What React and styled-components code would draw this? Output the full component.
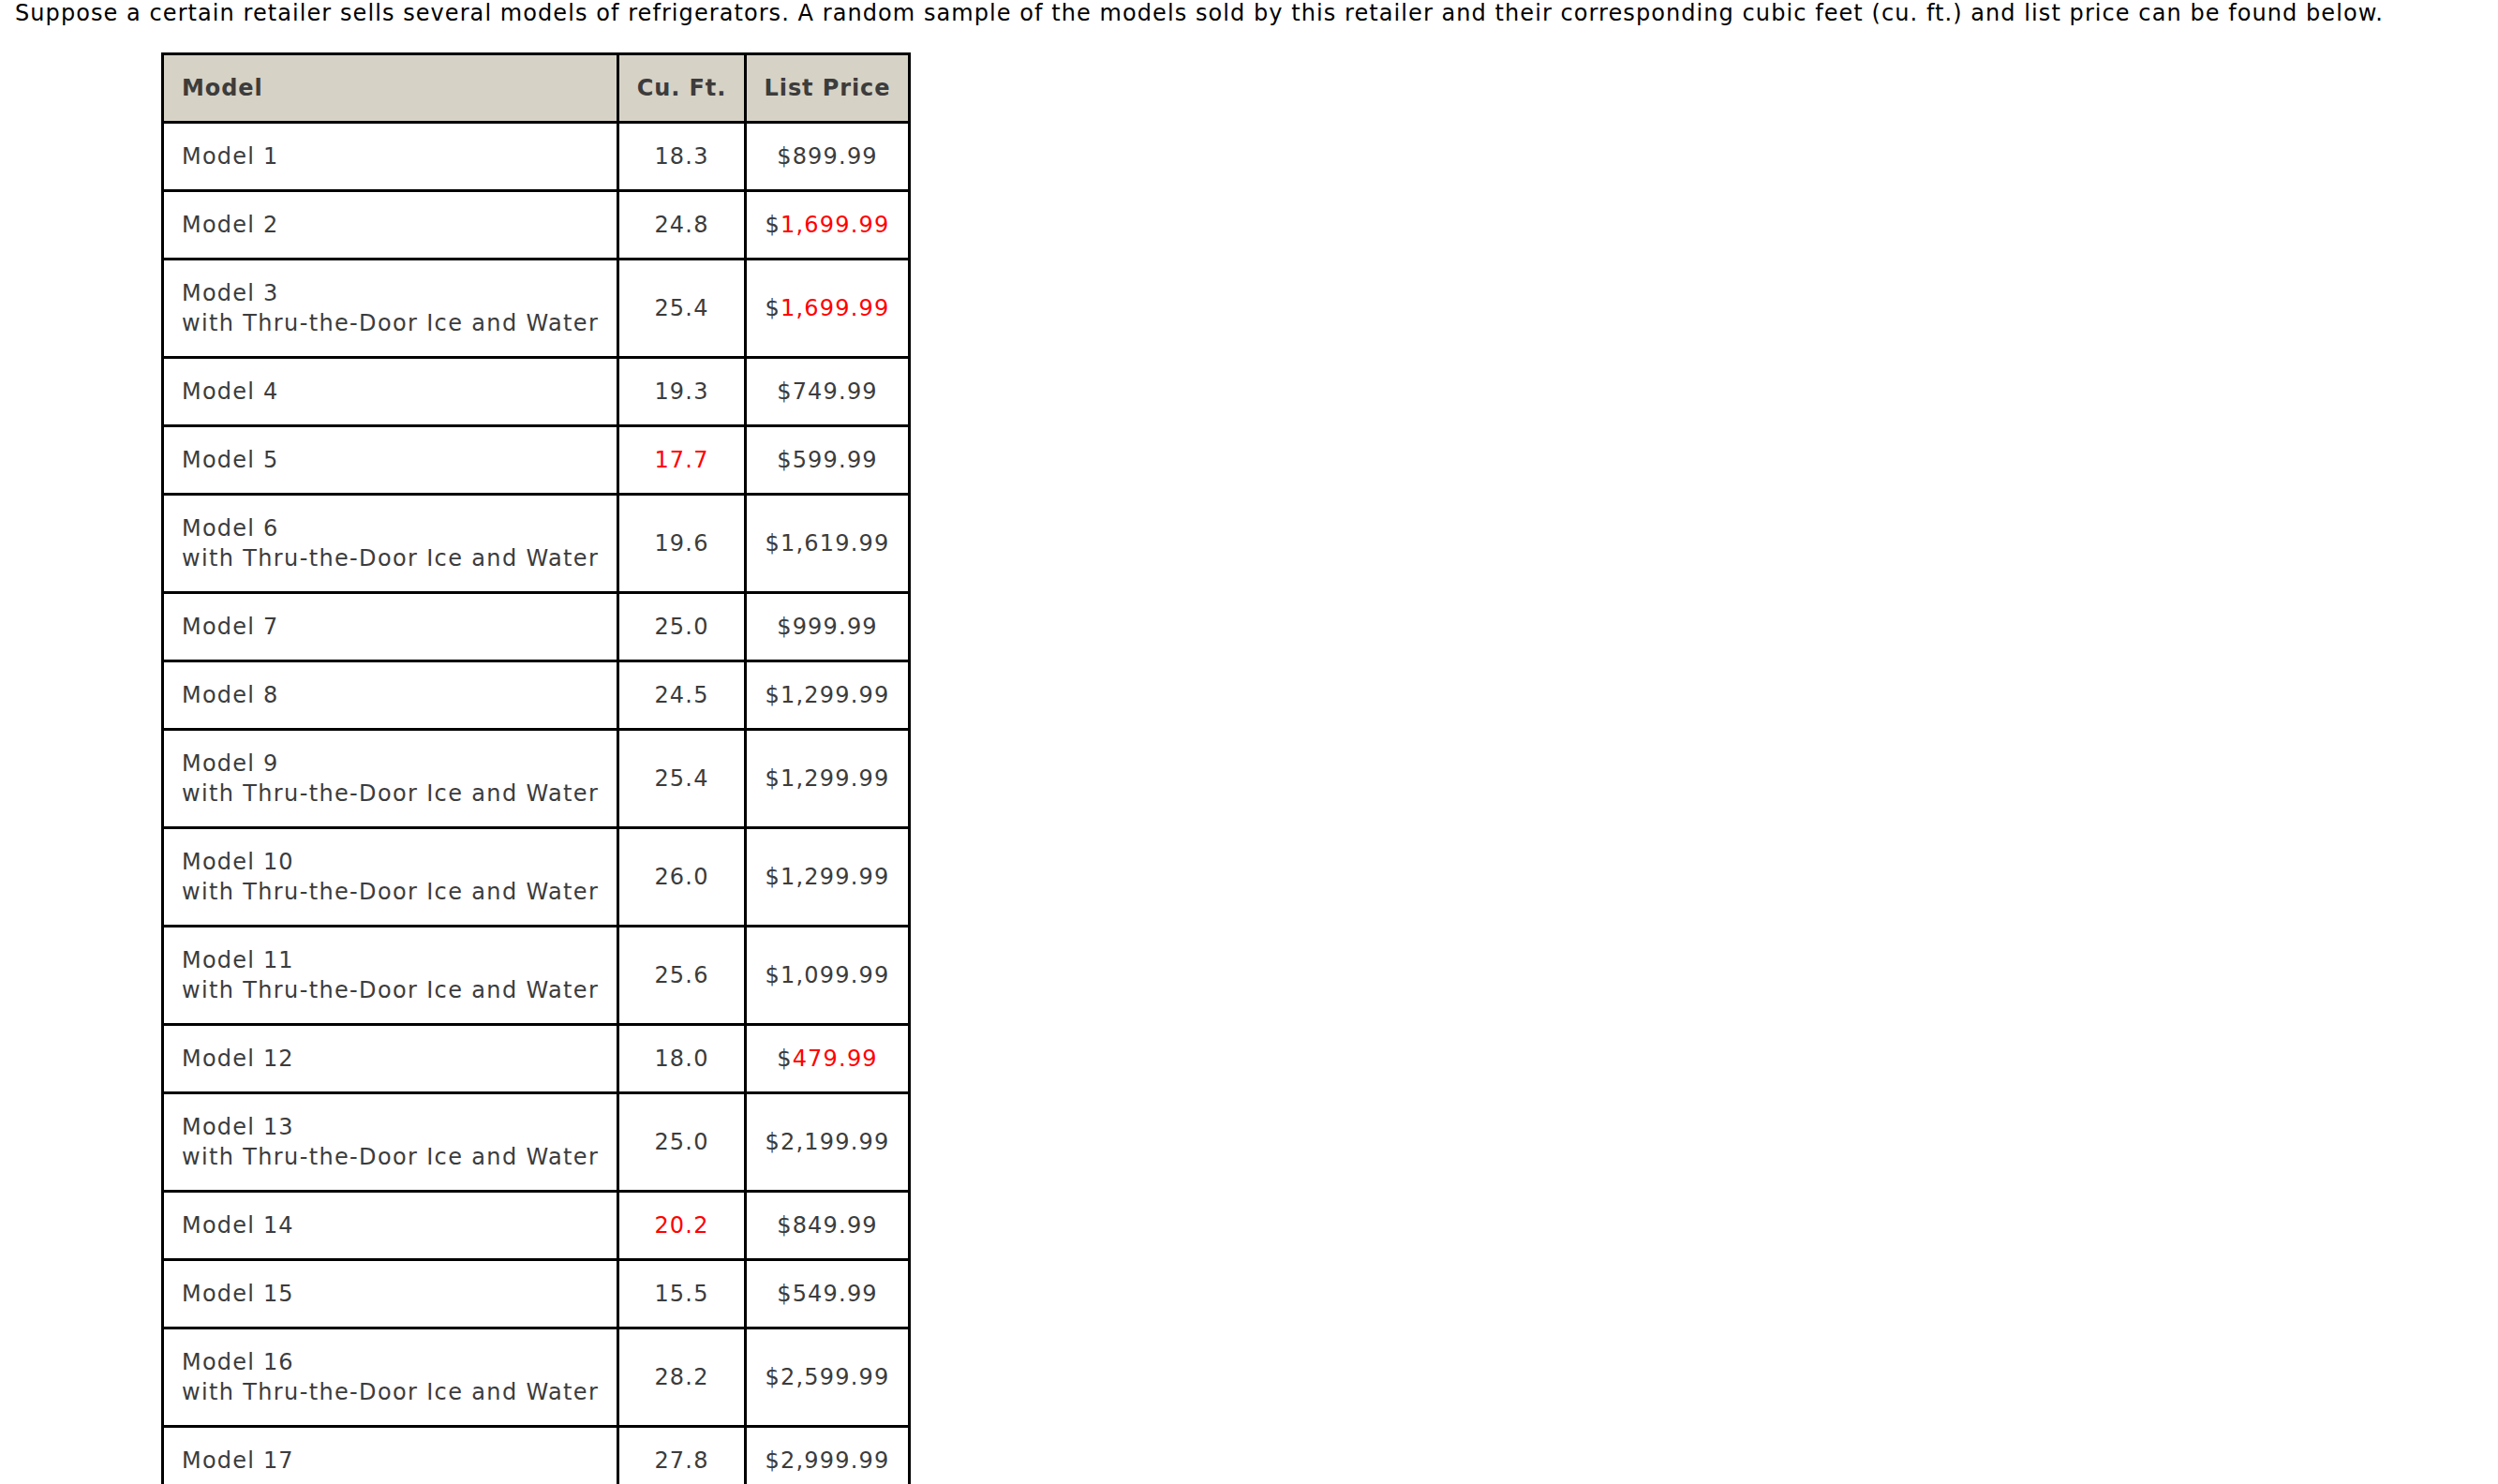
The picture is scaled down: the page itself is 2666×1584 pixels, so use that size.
import React from 'react';
import styled, { createGlobalStyle } from 'styled-components';

const GlobalStyle = createGlobalStyle`
  body {
    margin: 0;
    background: #ffffff;
    font-family: "DejaVu Sans", Verdana, sans-serif;
  }
`;

const Page = styled.div`
  padding: 0 16px;
`;

const Intro = styled.p`
  margin: 0;
  font-size: 24px;
  line-height: 28px;
  letter-spacing: 1.07px;
  color: #000;
`;

const Table = styled.table`
  margin: 28px 0 0 156px;
  border-collapse: collapse;
  table-layout: fixed;
  width: 797px;
  font-size: 24px;
  line-height: 32px;
  letter-spacing: 1.2px;
  color: #3c3c3c;
`;

const Col = styled.col`
  width: ${(p) => p.$w}px;
`;

const HeadCell = styled.th`
  background: #d6d2c6;
  border: 3px solid #000;
  padding: 19px 0;
  padding-left: ${(p) => (p.$left ? '19px' : '0')};
  font-weight: bold;
  letter-spacing: 0.9px;
  text-align: ${(p) => (p.$left ? 'left' : 'center')};
`;

const Cell = styled.td`
  border: 3px solid #000;
  padding: 19px 0;
  padding-left: ${(p) => (p.$left ? '19px' : '0')};
  vertical-align: middle;
  white-space: nowrap;
  text-align: ${(p) => (p.$left ? 'left' : 'center')};
`;

const Feature = styled.span`
  letter-spacing: 1.35px;
`;

const Red = styled.span`
  color: #ff0000;
`;

const rows = [
  { n: 1, cu: '18.3', price: '899.99' },
  { n: 2, cu: '24.8', price: '1,699.99', redPrice: true },
  { n: 3, ice: true, cu: '25.4', price: '1,699.99', redPrice: true },
  { n: 4, cu: '19.3', price: '749.99' },
  { n: 5, cu: '17.7', price: '599.99', redCu: true },
  { n: 6, ice: true, cu: '19.6', price: '1,619.99' },
  { n: 7, cu: '25.0', price: '999.99' },
  { n: 8, cu: '24.5', price: '1,299.99' },
  { n: 9, ice: true, cu: '25.4', price: '1,299.99' },
  { n: 10, ice: true, cu: '26.0', price: '1,299.99' },
  { n: 11, ice: true, cu: '25.6', price: '1,099.99' },
  { n: 12, cu: '18.0', price: '479.99', redPrice: true },
  { n: 13, ice: true, cu: '25.0', price: '2,199.99' },
  { n: 14, cu: '20.2', price: '849.99', redCu: true },
  { n: 15, cu: '15.5', price: '549.99' },
  { n: 16, ice: true, cu: '28.2', price: '2,599.99' },
  { n: 17, cu: '27.8', price: '2,999.99' },
];

const App = () => (
  <Page>
    <GlobalStyle />
    <Intro>
      Suppose a certain retailer sells several models of refrigerators. A random sample of the models sold by this
      retailer and their corresponding cubic feet (cu. ft.) and list price can be found below.
    </Intro>
    <Table>
      <colgroup>
        <Col $w={486} />
        <Col $w={136} />
        <Col $w={175} />
      </colgroup>
      <thead>
        <tr>
          <HeadCell $left>Model</HeadCell>
          <HeadCell>Cu. Ft.</HeadCell>
          <HeadCell>List Price</HeadCell>
        </tr>
      </thead>
      <tbody>
        {rows.map((r) => (
          <tr key={r.n}>
            <Cell $left>
              Model {r.n}
              {r.ice && (
                <>
                  <br />
                  <Feature>with Thru-the-Door Ice and Water</Feature>
                </>
              )}
            </Cell>
            <Cell>{r.redCu ? <Red>{r.cu}</Red> : r.cu}</Cell>
            <Cell>
              ${r.redPrice ? <Red>{r.price}</Red> : r.price}
            </Cell>
          </tr>
        ))}
      </tbody>
    </Table>
  </Page>
);

export default App;
